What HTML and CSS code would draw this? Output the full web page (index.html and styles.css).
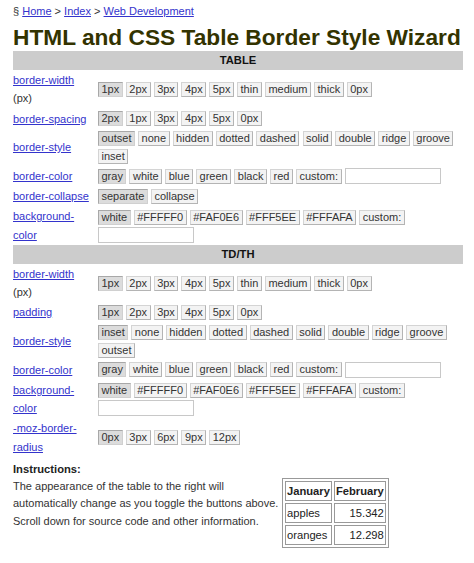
FILE: index.html
```html
<!DOCTYPE html>
<html lang="en">
<head>
    <meta charset="UTF-8">
    <title>HTML and CSS Table Border Style Wizard</title>
    <link rel="stylesheet" href="styles.css">
</head>
<body>
    <p class="crumbs">&sect; <a href="#">Home</a> &gt; <a href="#">Index</a> &gt; <a href="#">Web Development</a></p>
    <h1>HTML and CSS Table Border Style Wizard</h1>

    <table class="wizard">
        <tr><th colspan="2">TABLE</th></tr>
        <tr>
            <td class="label"><a href="#">border-width</a><br>(px)</td>
            <td class="opts"><button class="on">1px</button> <button>2px</button> <button>3px</button> <button>4px</button> <button>5px</button> <button>thin</button> <button>medium</button> <button>thick</button> <button>0px</button></td>
        </tr>
        <tr>
            <td class="label"><a href="#">border-spacing</a></td>
            <td class="opts"><button class="on">2px</button> <button>1px</button> <button>3px</button> <button>4px</button> <button>5px</button> <button>0px</button></td>
        </tr>
        <tr>
            <td class="label"><a href="#">border-style</a></td>
            <td class="opts"><button class="on">outset</button> <button>none</button> <button>hidden</button> <button>dotted</button> <button>dashed</button> <button>solid</button> <button>double</button> <button>ridge</button> <button>groove</button> <button>inset</button></td>
        </tr>
        <tr>
            <td class="label"><a href="#">border-color</a></td>
            <td class="opts"><button class="on">gray</button> <button>white</button> <button>blue</button> <button>green</button> <button>black</button> <button>red</button> <button>custom:</button> <input type="text" class="custom"></td>
        </tr>
        <tr>
            <td class="label"><a href="#">border-collapse</a></td>
            <td class="opts"><button class="on">separate</button> <button>collapse</button></td>
        </tr>
        <tr>
            <td class="label"><a href="#">background-color</a></td>
            <td class="opts"><button class="on">white</button> <button>#FFFFF0</button> <button>#FAF0E6</button> <button>#FFF5EE</button> <button>#FFFAFA</button> <button>custom:</button> <input type="text" class="custom"></td>
        </tr>

        <tr><th colspan="2">TD/TH</th></tr>
        <tr>
            <td class="label"><a href="#">border-width</a><br>(px)</td>
            <td class="opts"><button class="on">1px</button> <button>2px</button> <button>3px</button> <button>4px</button> <button>5px</button> <button>thin</button> <button>medium</button> <button>thick</button> <button>0px</button></td>
        </tr>
        <tr>
            <td class="label"><a href="#">padding</a></td>
            <td class="opts"><button class="on">1px</button> <button>2px</button> <button>3px</button> <button>4px</button> <button>5px</button> <button>0px</button></td>
        </tr>
        <tr>
            <td class="label"><a href="#">border-style</a></td>
            <td class="opts"><button class="on">inset</button> <button>none</button> <button>hidden</button> <button>dotted</button> <button>dashed</button> <button>solid</button> <button>double</button> <button>ridge</button> <button>groove</button> <button>outset</button></td>
        </tr>
        <tr>
            <td class="label"><a href="#">border-color</a></td>
            <td class="opts"><button class="on">gray</button> <button>white</button> <button>blue</button> <button>green</button> <button>black</button> <button>red</button> <button>custom:</button> <input type="text" class="custom"></td>
        </tr>
        <tr>
            <td class="label"><a href="#">background-color</a></td>
            <td class="opts"><button class="on">white</button> <button>#FFFFF0</button> <button>#FAF0E6</button> <button>#FFF5EE</button> <button>#FFFAFA</button> <button>custom:</button> <input type="text" class="custom"></td>
        </tr>
        <tr>
            <td class="label"><a href="#">-moz-border-radius</a></td>
            <td class="opts"><button class="on">0px</button> <button>3px</button> <button>6px</button> <button>9px</button> <button>12px</button></td>
        </tr>
    </table>

    <h4>Instructions:</h4>
    <div class="instructions">
        <p>The appearance of the table to the right will automatically change as you toggle the buttons above. Scroll down for source code and other information.</p>
        <table class="sample">
            <tr><th>January</th><th>February</th></tr>
            <tr><td>apples</td><td class="num">15.342</td></tr>
            <tr><td>oranges</td><td class="num">12.298</td></tr>
        </table>
    </div>
</body>
</html>
```

FILE: styles.css
```css
body {
    margin: 0;
    padding: 2px 13px;
    font-family: "Liberation Sans", Arial, sans-serif;
    font-size: 11px;
    color: #333;
    background: #fff;
}

a {
    color: #3333cc;
}

.crumbs {
    margin: 0;
    line-height: 18px;
}

h1 {
    margin: 3px 0 0;
    font-size: 22.7px;
    line-height: 28px;
    color: #333300;
    white-space: nowrap;
}

/* option table */
.wizard {
    width: 450px;
    border-collapse: collapse;
}

.wizard th {
    background-color: #cccccc;
    color: #111;
    font-size: 11.2px;
    line-height: 17px;
    padding: 1px 0;
    text-align: center;
}

.wizard td {
    padding: 1px 0;
    vertical-align: middle;
}

.label {
    width: 82px;
    padding-right: 3px !important;
    line-height: 18.25px;
}

.opts {
    line-height: 17.5px;
}

button {
    font-family: inherit;
    font-size: 11px;
    line-height: 13px;
    color: #333;
    margin: 0;
    padding: 0 2.5px;
    background-color: #f3f3f3;
    border: 1px solid;
    border-color: #d4d4d4 #b4b4b4 #b4b4b4 #d4d4d4;
    border-radius: 0;
    vertical-align: middle;
    cursor: pointer;
}

button.on {
    background-color: #dcdcdc;
    border-color: #a8a8a8 #d0d0d0 #d0d0d0 #a8a8a8;
}

.custom {
    box-sizing: border-box;
    width: 96px;
    height: 16px;
    margin: 0;
    padding: 0 2px;
    font: inherit;
    border: 1px solid #c8c8c8;
    vertical-align: middle;
}

/* instructions + sample */
h4 {
    margin: 3px 0 0;
    font-size: 11.2px;
    line-height: 18px;
    color: #222;
}

.instructions {
    display: flex;
    align-items: flex-start;
}

.instructions p {
    flex: 0 0 267px;
    margin: 0;
    line-height: 17.5px;
}

.sample {
    margin-left: 2px;
    border: 1px solid #999;
    border-spacing: 2px;
    font-size: 11.2px;
    color: #222;
}

.sample th,
.sample td {
    border: 1px solid #999;
    padding: 1px;
    line-height: 16px;
    text-align: left;
}

.sample .num {
    text-align: right;
}
```
